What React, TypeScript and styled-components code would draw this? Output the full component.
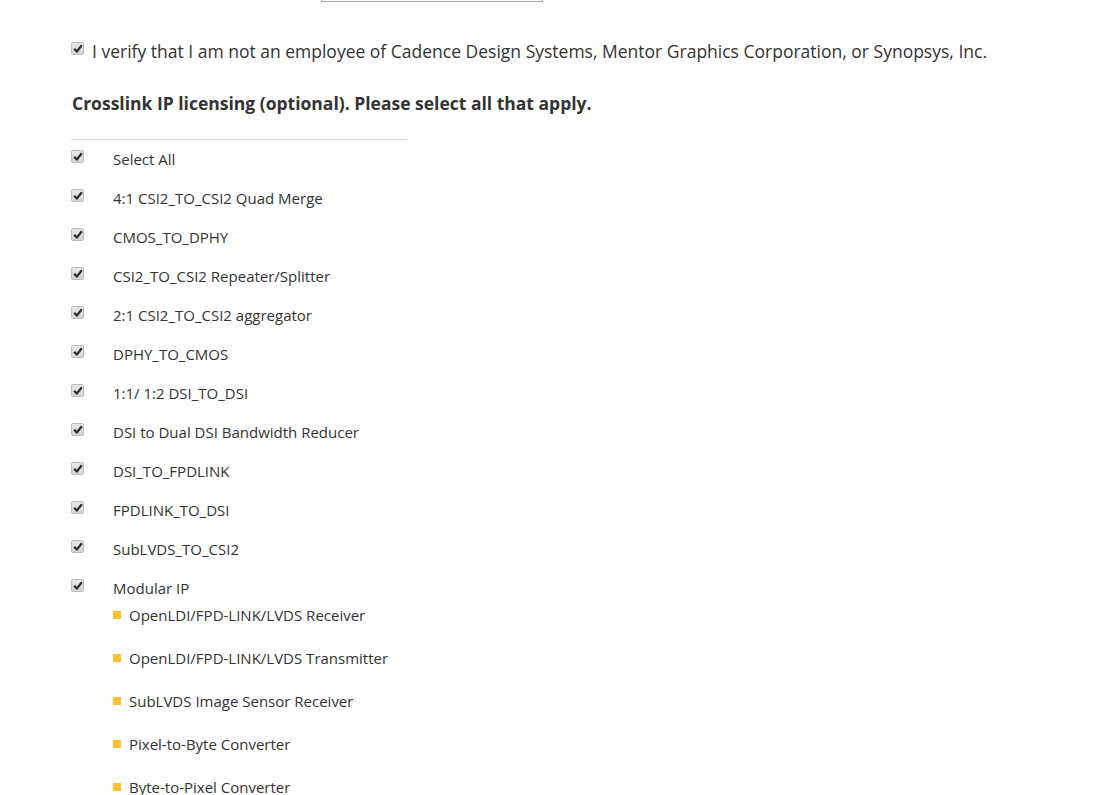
import React from "react";
import styled, { createGlobalStyle } from "styled-components";

const Global = createGlobalStyle`
  html, body { margin: 0; padding: 0; background: #fff; }
  body { font-family: "Open Sans", "Noto Sans", sans-serif; color: #333; }
`;

const Page = styled.div`
  padding-left: 71px;
`;

const InputStub = styled.div`
  margin-left: 250px;
  width: 220px;
  height: 1px;
  border: 1px solid #a9a9a9;
  border-top: none;
`;

const VerifyRow = styled.label`
  display: flex;
  align-items: flex-start;
  margin-top: 37px;
  font-size: 17.5px;
  line-height: 24px;
  color: #333;
`;

const VerifyText = styled.span`
  margin-left: 8px;
`;

const Heading = styled.h3`
  margin: 28px 0 0 1px;
  font-size: 17.5px;
  line-height: 24px;
  font-weight: 700;
  color: #333;
`;

const Rule = styled.hr`
  margin: 24px 0 0 0;
  width: 336px;
  border: none;
  border-top: 1px solid #ddd;
  height: 0;
`;

const List = styled.div`
  margin-top: 9px;
`;

const Row = styled.label<{ $gap?: number }>`
  display: flex;
  align-items: flex-start;
  font-size: 15px;
  line-height: 20px;
  color: #333;
  margin-bottom: ${(p) => (p.$gap ?? 19)}px;
`;

const RowText = styled.span`
  margin-left: 29px;
`;

const Box = styled.span<{ $top: number }>`
  flex: none;
  display: inline-flex;
  align-items: center;
  justify-content: center;
  width: 11px;
  height: 11px;
  margin-top: ${(p) => p.$top}px;
  border: 1px solid #bdbdbd;
  border-radius: 2px;
  background: linear-gradient(#e8e8e8, #d4d4d4);
`;

const SubList = styled.ul`
  list-style: none;
  margin: 7px 0 0 42px;
  padding: 0;
`;

const SubItem = styled.li`
  display: flex;
  align-items: center;
  font-size: 15px;
  line-height: 20px;
  color: #333;
  margin-bottom: 23px;
  &::before {
    content: "";
    width: 8px;
    height: 8px;
    background: #fdc02f;
    margin-right: 8px;
    flex: none;
  }
`;

const Check = ({ top }: { top: number }) => (
  <Box $top={top}>
    <svg width="10" height="9" viewBox="0 0 10 9">
      <path d="M1.2 4.8 L3.8 7.6 L8.8 1.2" fill="none" stroke="#2a2a2a" strokeWidth="2.2" strokeLinejoin="round" />
    </svg>
  </Box>
);

const items = [
  "Select All",
  "4:1 CSI2_TO_CSI2 Quad Merge",
  "CMOS_TO_DPHY",
  "CSI2_TO_CSI2 Repeater/Splitter",
  "2:1 CSI2_TO_CSI2 aggregator",
  "DPHY_TO_CMOS",
  "1:1/ 1:2 DSI_TO_DSI",
  "DSI to Dual DSI Bandwidth Reducer",
  "DSI_TO_FPDLINK",
  "FPDLINK_TO_DSI",
  "SubLVDS_TO_CSI2",
];

const subItems = [
  "OpenLDI/FPD-LINK/LVDS Receiver",
  "OpenLDI/FPD-LINK/LVDS Transmitter",
  "SubLVDS Image Sensor Receiver",
  "Pixel-to-Byte Converter",
  "Byte-to-Pixel Converter",
];

export default function App() {
  return (
    <Page>
      <Global />
      <InputStub />
      <VerifyRow>
        <Check top={3} />
        <VerifyText>
          I verify that I am not an employee of Cadence Design Systems, Mentor Graphics Corporation, or Synopsys, Inc.
        </VerifyText>
      </VerifyRow>
      <Heading>Crosslink IP licensing (optional). Please select all that apply.</Heading>
      <Rule />
      <List>
        {items.map((t) => (
          <Row key={t}>
            <Check top={1} />
            <RowText>{t}</RowText>
          </Row>
        ))}
        <Row $gap={0}>
          <Check top={1} />
          <RowText>Modular IP</RowText>
        </Row>
        <SubList>
          {subItems.map((t) => (
            <SubItem key={t}>{t}</SubItem>
          ))}
        </SubList>
      </List>
    </Page>
  );
}
